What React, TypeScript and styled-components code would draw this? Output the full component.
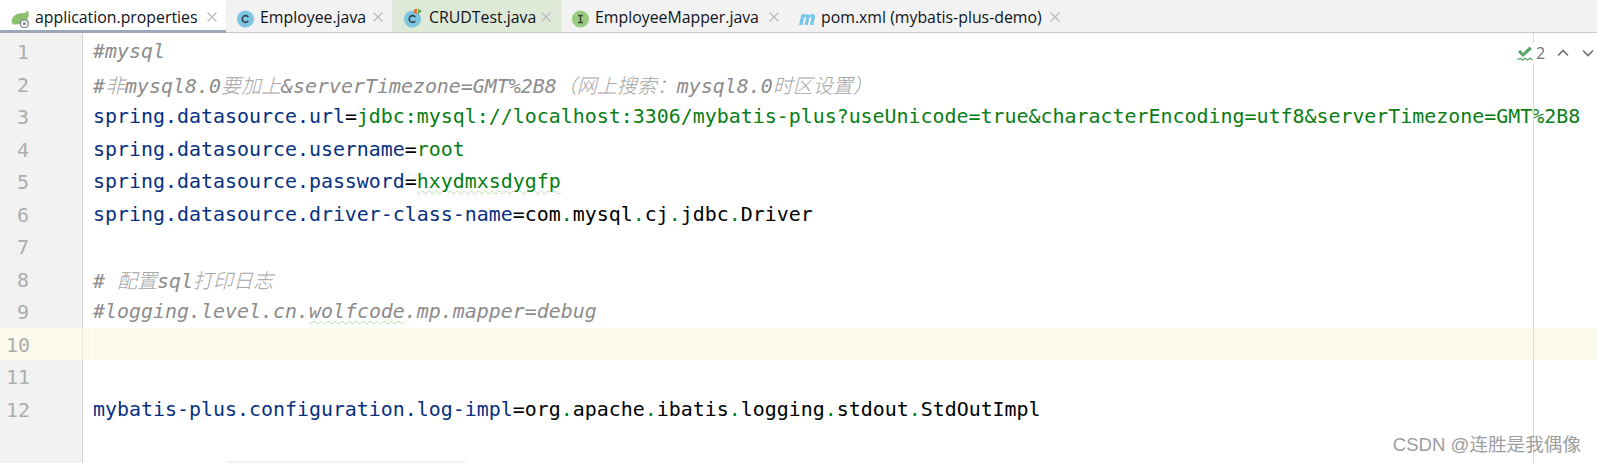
import React from "react";
import styled, { createGlobalStyle } from "styled-components";

const Global = createGlobalStyle`
  html, body { margin: 0; padding: 0; background: #fff; }
`;

const Page = styled.div`
  position: relative;
  width: 1597px;
  height: 463px;
  overflow: hidden;
  background: #fff;
  display: flex;
  flex-direction: column;
`;

const TabBar = styled.div`
  display: flex;
  height: 33px;
  flex: none;
  background: #f2f2f2;
  border-bottom: 1px solid #c9c9c9;
  box-sizing: border-box;
`;

const Tab = styled.div<{ $w: number; $pad?: number; $bg?: string; $active?: boolean }>`
  position: relative;
  box-sizing: border-box;
  width: ${(p) => p.$w}px;
  height: ${(p) => (p.$active ? 33 : 32)}px;
  flex: none;
  display: flex;
  align-items: flex-start;
  padding: 8px 0 0 ${(p) => p.$pad ?? 10}px;
  background: ${(p) => p.$bg ?? "transparent"};
  border-bottom: ${(p) => (p.$active ? "3px solid #9ca7b8" : "none")};
`;

const TabIcon = styled.svg<{ $w?: number }>`
  width: ${(p) => p.$w ?? 20}px;
  height: 20px;
  flex: none;
`;

const TabLabel = styled.span<{ $gap: number }>`
  font-family: "Open Sans", "Liberation Sans", sans-serif;
  font-size: 15.85px;
  line-height: 19px;
  color: #0e1420;
  margin-left: ${(p) => p.$gap}px;
  white-space: nowrap;
`;

const Close = styled.svg<{ $gap: number }>`
  width: 10px;
  height: 10px;
  flex: none;
  margin: 4px 0 0 ${(p) => p.$gap}px;
`;

const Editor = styled.div`
  flex: 1;
  padding-top: 2px;
  background: linear-gradient(to right, #f2f2f2 0, #f2f2f2 82px, #d4d4d4 82px, #d4d4d4 83px, #fff 83px);
`;

const Row = styled.div<{ $current?: boolean }>`
  display: flex;
  height: 32.5px;
  background: ${(p) => (p.$current ? "#fcfaed" : "transparent")};
`;

const LineNo = styled.div<{ $current?: boolean }>`
  box-sizing: border-box;
  width: 83px;
  flex: none;
  padding-left: 6px;
  font: 20px/34px "DejaVu Sans Mono", monospace;
  color: #adadad;
  border-right: 1px solid ${(p) => (p.$current ? "#e9e9e2" : "#d4d4d4")};
`;

const NoText = styled.span`
  display: inline-block;
  width: 23px;
  text-align: right;
`;

const Code = styled.div`
  margin-left: 8px;
  padding-left: 1px;
  border-left: 1px solid #fff;
  font: 19.93px/34px "DejaVu Sans Mono", "Noto Sans CJK SC", monospace;
  white-space: pre;
  color: #000;
`;

const Key = styled.span`color: #083080;`;
const Val = styled.span`color: #0a7d14;`;
const Dot = styled.span`color: #0a7d14;`;
const Cmt = styled.span`
  color: #8c8c8c;
  font-style: italic;
`;
const Cjk = styled.span`
  font-family: "Noto Sans CJK SC", sans-serif;
  font-weight: 300;
  font-size: 20px;
  color: #a6a6a6;
`;
const Wavy = styled.span`
  text-decoration: underline wavy #b4dcac 1px;
  text-underline-offset: 2px;
`;

const Margin = styled.div`
  position: absolute;
  left: 1533px;
  top: 33px;
  bottom: 0;
  width: 1px;
  background: #d9d9d9;
`;

const Inspect = styled.div`
  position: absolute;
  top: 43px;
  left: 1516px;
  width: 81px;
  height: 20px;
  background: #fff;
  display: flex;
  align-items: center;
`;

const CheckIcon = styled.svg`
  width: 16px;
  height: 15px;
  margin-left: 1px;
  flex: none;
`;

const Count = styled.span`
  font: 16px/18px "Open Sans", sans-serif;
  color: #6b7280;
  margin-left: 3px;
`;

const Chevron = styled.svg<{ $ml: number }>`
  width: 12px;
  height: 8px;
  margin-left: ${(p) => p.$ml}px;
  flex: none;
`;

const Watermark = styled.div`
  position: absolute;
  right: 16px;
  top: 434px;
  font: 18.6px/22px "Liberation Sans", "Noto Sans CJK SC", sans-serif;
  color: #9e9e9e;
  white-space: nowrap;
`;

const BottomShade = styled.div`
  position: absolute;
  left: 226px;
  width: 240px;
  bottom: 0;
  height: 2px;
  background: #f1f1f1;
  filter: blur(0.6px);
`;

const CloseX = ({ gap }: { gap: number }) => (
  <Close $gap={gap} viewBox="0 0 10 10">
    <path d="M0.5 0.5 L9.5 9.5 M9.5 0.5 L0.5 9.5" stroke="#b9b9b9" strokeWidth="1.2" fill="none" />
  </Close>
);

const ClassGlyph = ({ letter = "c", fill = "#7cc6e2" }: { letter?: string; fill?: string }) => (
  <>
    <circle cx="9.5" cy="11" r="8.6" fill={fill} />
    {letter === "c" ? (
      <path d="M12.3 8.9 A3.4 3.4 0 1 0 12.3 13.1" stroke="#33404a" strokeWidth="1.6" fill="none" />
    ) : (
      <path d="M7 7.5 H12 M9.5 7.5 V14.5 M7 14.5 H12" stroke="#3e4a36" strokeWidth="1.6" fill="none" />
    )}
  </>
);

const Lines: React.ReactNode[] = [
  <Cmt>#mysql</Cmt>,
  <Cmt>#<Cjk>非</Cjk>mysql8.0<Cjk>要加上</Cjk>&amp;serverTimezone=GMT%2B8<Cjk>（网上搜索：</Cjk>mysql8.0<Cjk>时区设置）</Cjk></Cmt>,
  <><Key>spring.datasource.url</Key>=<Val>jdbc:mysql://localhost:3306/mybatis-plus?useUnicode=true&amp;characterEncoding=utf8&amp;serverTimezone=GMT%2B8</Val></>,
  <><Key>spring.datasource.username</Key>=<Val>root</Val></>,
  <><Key>spring.datasource.password</Key>=<Val><Wavy>hxydmxsdygfp</Wavy></Val></>,
  <><Key>spring.datasource.driver-class-name</Key>=com<Dot>.</Dot>mysql<Dot>.</Dot>cj<Dot>.</Dot>jdbc<Dot>.</Dot>Driver</>,
  null,
  <Cmt># <Cjk>配置</Cjk>sql<Cjk>打印日志</Cjk></Cmt>,
  <Cmt>#logging.level.cn.<Wavy>wolfcode</Wavy>.mp.mapper=debug</Cmt>,
  null,
  null,
  <><Key>mybatis-plus.configuration.log-impl</Key>=org<Dot>.</Dot>apache<Dot>.</Dot>ibatis<Dot>.</Dot>logging<Dot>.</Dot>stdout<Dot>.</Dot>StdOutImpl</>,
];

export default function App() {
  return (
    <Page>
      <Global />
      <TabBar>
        <Tab $w={226} $pad={11} $active $bg="#fff">
          <TabIcon viewBox="0 -1.5 21 21">
            <path d="M0.5 13 C1 6 7 3.5 13 4 C15 3.6 16.5 2.5 18 1 C19.5 6 18 11 14 13.5 C10 16 5 16 2 15.5 Z" fill="#8cc26e" />
            <circle cx="14" cy="15" r="5" fill="#8b8f94" />
            <circle cx="14" cy="15" r="3.4" fill="#fff" />
            <circle cx="14" cy="15" r="1.7" fill="#8b8f94" />
          </TabIcon>
          <TabLabel $gap={4}>application.properties</TabLabel>
          <CloseX gap={9} />
        </Tab>
        <Tab $w={166}>
          <TabIcon viewBox="0 0 20 20"><ClassGlyph /></TabIcon>
          <TabLabel $gap={4}>Employee.java</TabLabel>
          <CloseX gap={7} />
        </Tab>
        <Tab $w={169} $pad={11} $bg="#dfe9d8">
          <TabIcon viewBox="0 0 20 20">
            <ClassGlyph />
            <path d="M11 1.5 L14 0.5 V6 L11 5 Z" fill="#e0703a" />
            <path d="M15 0.5 L19 3.2 L15 6 Z" fill="#5fa85a" />
          </TabIcon>
          <TabLabel $gap={6}>CRUDTest.java</TabLabel>
          <CloseX gap={5} />
        </Tab>
        <Tab $w={225}>
          <TabIcon viewBox="0 0 20 20"><ClassGlyph letter="I" fill="#9acb80" /></TabIcon>
          <TabLabel $gap={4}>EmployeeMapper.java</TabLabel>
          <CloseX gap={10} />
        </Tab>
        <Tab $w={300}>
          <TabIcon $w={22} viewBox="0 0 20 20">
            <path d="M2 17 L4.6 6 H8 L7.7 7.6 C9 5.8 11.5 5.5 12.4 7.6 C13.8 5.6 18.3 5.2 18 9 L16.2 17 H12.8 L14.4 10 C14.6 8.6 13 8.4 12.3 10 L10.8 17 H7.6 L9.1 10 C9.3 8.6 7.8 8.4 7 10 L5.5 17 Z" fill="#75c6ea" />
          </TabIcon>
          <TabLabel $gap={3}>pom.xml (mybatis-plus-demo)</TabLabel>
          <CloseX gap={8} />
        </Tab>
      </TabBar>
      <Editor>
        {Lines.map((l, i) => (
          <Row key={i} $current={i === 9}>
            <LineNo $current={i === 9}><NoText>{i + 1}</NoText></LineNo>
            <Code>{l}</Code>
          </Row>
        ))}
      </Editor>
      <Margin />
      <Inspect>
        <CheckIcon viewBox="0 0 16 15">
          <path d="M1 6 L3.2 3.8 L6 7 L12.5 0.5 L15 3 L6 11 Z" fill="#59a869" />
          <path d="M0.5 14 L3 12.3 L5.5 14 L8 12.3 L10.5 14 L13 12.3 L15.5 14" stroke="#59a869" strokeWidth="1.2" fill="none" />
        </CheckIcon>
        <Count>2</Count>
        <Chevron $ml={12} viewBox="0 0 12 8"><path d="M1 6.5 L6 1.5 L11 6.5" stroke="#6e6e6e" strokeWidth="1.6" fill="none" /></Chevron>
        <Chevron $ml={13} viewBox="0 0 12 8"><path d="M1 1.5 L6 6.5 L11 1.5" stroke="#6e6e6e" strokeWidth="1.6" fill="none" /></Chevron>
      </Inspect>
      <Watermark>CSDN @连胜是我偶像</Watermark>
      <BottomShade />
    </Page>
  );
}
